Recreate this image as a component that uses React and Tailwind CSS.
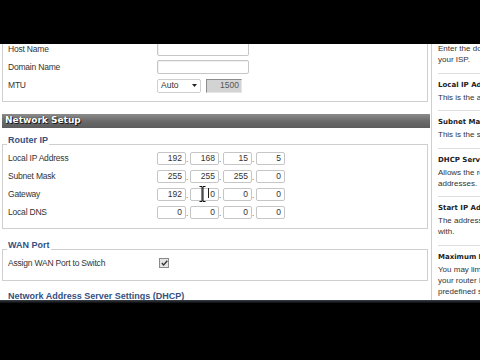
import React from "react";

const help = [
  { title: "Domain Name", lines: ["Enter the domain name provided by", "your ISP."] },
  { title: "Local IP Address", lines: ["This is the address of the router."] },
  { title: "Subnet Mask", lines: ["This is the subnet mask of the router."] },
  { title: "DHCP Server", lines: ["Allows the router to assign IP", "addresses."] },
  { title: "Start IP Address", lines: ["The address the DHCP server will start", "with."] },
  {
    title: "Maximum DHCP Users",
    lines: [
      "You may limit the number of addresses",
      "your router hands out. By default, the",
      "predefined setting is 50 computers handed",
      "out.",
    ],
  },
];

const routerIp = [
  { label: "Local IP Address", parts: ["192", "168", "15", "5"] },
  { label: "Subnet Mask", parts: ["255", "255", "255", "0"] },
  { label: "Gateway", parts: ["192", "0", "0", "0"], caret: true },
  { label: "Local DNS", parts: ["0", "0", "0", "0"] },
];

const Row = ({ label, children, tall }) => (
  <div className={`flex items-center ${tall ? "h-[19px]" : "h-[18px]"}`}>
    <div className="w-[149px] text-[8.5px] tracking-[-0.2px] text-[#333]">{label}</div>
    {children}
  </div>
);

const TextBox = () => (
  <div className="w-[92px] h-[14px] border border-[#c6c6c6] rounded-[2px] bg-white shadow-[inset_1px_1px_0_#f0f0f0]" />
);

const IpBox = ({ value, caret }) => (
  <div className="w-[29px] h-[13px] border border-[#c6c6c6] rounded-[2px] bg-white flex items-center justify-end pr-[3px] text-[8.5px] text-[#333]">
    {caret && <span className="w-[1px] h-[10px] bg-[#222] mr-[1px] -mt-[3px]" />}
    {value}
  </div>
);

const Group = ({ title, className, children, bottom = "pb-[7px]" }) => (
  <div className={`ml-[2px] w-[426px] ${className}`}>
    <div className="flex items-end h-[10px]">
      <div className="w-[5px] border-b border-[#cfcfcf]" />
      <span className="px-[1px] text-[9px] leading-[10px] font-bold text-[#36507f]">{title}</span>
      <div className="flex-1 border-b border-[#cfcfcf]" />
    </div>
    <div className={`border-x border-b border-[#cfcfcf] pl-[5px] pt-[4px] ${bottom}`}>{children}</div>
  </div>
);

const App = () => {
  return (
    <div className="w-[480px] h-[360px] overflow-hidden bg-black flex flex-col font-['Liberation_Sans',Arial,sans-serif]">
      <div className="h-[44px] shrink-0 bg-black" />

      <div className="h-[256px] shrink-0 flex bg-white overflow-hidden">
        {/* main settings */}
        <div className="w-[431px] shrink-0">
          <div className="ml-[2px] w-[426px] -mt-[4px] border-x border-b border-[#cfcfcf] pl-[5px] pb-[6px]">
            <Row label="Host Name">
              <TextBox />
            </Row>
            <Row label="Domain Name">
              <TextBox />
            </Row>
            <Row label="MTU" tall>
              <div className="w-[44px] h-[14px] border border-[#cfcfcf] rounded-[2px] bg-white flex items-center justify-between pl-[3px] pr-[3px] text-[8.5px] text-[#333]">
                <span>Auto</span>
                <svg width="5" height="3" viewBox="0 0 5 3">
                  <path d="M0 0h5L2.5 3z" fill="#222" />
                </svg>
              </div>
              <div className="ml-[5px] w-[36px] h-[14px] border border-t-[#8c8c8c] border-l-[#8c8c8c] border-r-[#e6e6e6] border-b-[#e6e6e6] bg-[#d3d3d3] flex items-center justify-end pr-[2px] text-[8.5px] text-[#555]">
                1500
              </div>
            </Row>
          </div>

          <div className="mt-[12px] ml-[2px] w-[428px] h-[14px] bg-gradient-to-b from-[#8c8c8c] via-[#6b6b6b] to-[#5c5c5c] flex items-center pl-[3px]">
            <span className="font-['DejaVu_Sans',Verdana,sans-serif] font-bold text-[9px] text-white [text-shadow:0_0_1px_#000,1px_1px_0_#1e1e1e]">
              Network Setup
            </span>
          </div>

          <Group title="Router IP" className="mt-[7px]">
            {routerIp.map((r) => (
              <Row key={r.label} label={r.label}>
                <div className="relative flex items-center">
                  {r.parts.map((p, i) => (
                    <React.Fragment key={i}>
                      <IpBox value={p} caret={r.caret && i === 1} />
                      {i < 3 && <span className="w-[4px] text-[8px] text-[#333] leading-none pt-[4px]">.</span>}
                    </React.Fragment>
                  ))}
                  {r.caret && (
                    <svg className="absolute left-[42px] top-[-2px]" width="7" height="16" viewBox="0 0 7 16">
                      <path d="M0.5 0.5h2.5v15H0.5M6.5 0.5H4v15h2.5" fill="none" stroke="#111" strokeWidth="1" />
                    </svg>
                  )}
                </div>
              </Row>
            ))}
          </Group>

          <Group title="WAN Port" className="mt-[11px]" bottom="pb-[8px]">
            <Row label="Assign WAN Port to Switch">
              <div className="ml-[2px] w-[10px] h-[10px] border border-[#8a8a8a] bg-[#e4e4e4] flex items-center justify-center">
                <svg width="7" height="6" viewBox="0 0 7 6">
                  <path d="M0.8 3l1.8 2L6.3 0.8" fill="none" stroke="#333" strokeWidth="1.3" />
                </svg>
              </div>
            </Row>
          </Group>

          <div className="mt-[10px] pl-[8px] text-[9px] leading-[10px] font-bold text-[#36507f] whitespace-nowrap">
            Network Address Server Settings (DHCP)
          </div>
        </div>

        {/* help column */}
        <div className="flex-1 border-l border-[#cfcfcf] pl-[6px] overflow-hidden">
          <div className="w-[180px] -mt-[19px]">
            {help.map((h) => (
              <div key={h.title} className="border-b border-[#dedede] pt-[5px] pb-[7.5px] whitespace-nowrap">
                <div className="font-['DejaVu_Sans',Verdana,sans-serif] text-[7px] leading-[12px] font-bold text-[#222]">
                  {h.title}
                </div>
                <div className="mt-[1px] text-[8px] leading-[11px] text-[#333]">
                  {h.lines.map((l) => (
                    <div key={l}>{l}</div>
                  ))}
                </div>
              </div>
            ))}
          </div>
        </div>
      </div>

      <div className="h-[3px] shrink-0 bg-gradient-to-b from-[#3b424a] to-[#0d0d0d]" />
      <div className="flex-1 bg-black" />
    </div>
  );
};

export default App;
